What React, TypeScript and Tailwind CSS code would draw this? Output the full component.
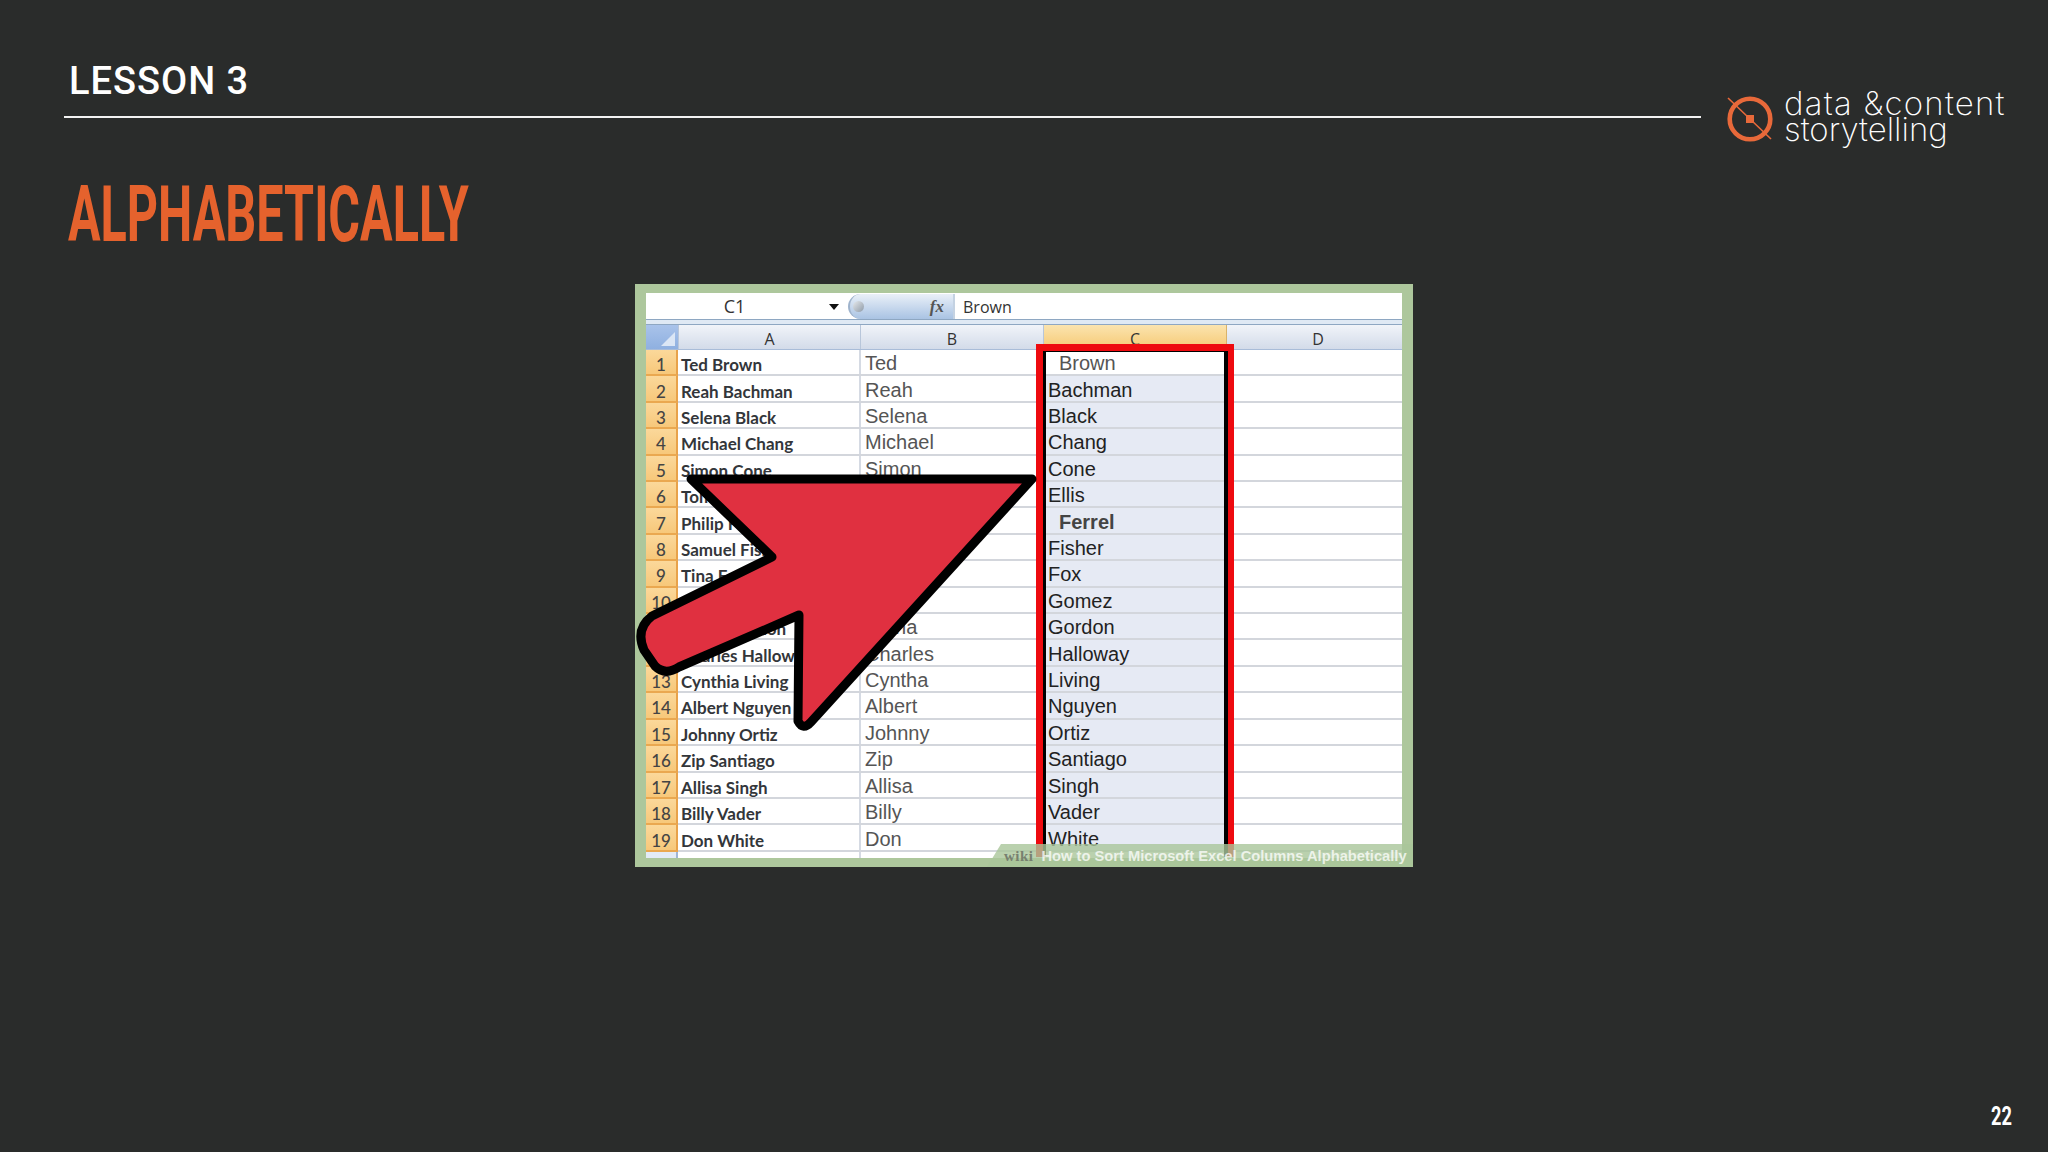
const rows: [string, string, string][] = [
  ["Ted Brown", "Ted", "Brown"],
  ["Reah Bachman", "Reah", "Bachman"],
  ["Selena Black", "Selena", "Black"],
  ["Michael Chang", "Michael", "Chang"],
  ["Simon Cone", "Simon", "Cone"],
  ["Tom Ellis", "Tom", "Ellis"],
  ["Philip Ferrel", "Philip", "Ferrel"],
  ["Samuel Fisher", "Samuel", "Fisher"],
  ["Tina Fox", "Tina", "Fox"],
  ["Maria Gomez", "Maria", "Gomez"],
  ["Diana Gordon", "Diana", "Gordon"],
  ["Charles Halloway", "Charles", "Halloway"],
  ["Cynthia Living", "Cyntha", "Living"],
  ["Albert Nguyen", "Albert", "Nguyen"],
  ["Johnny Ortiz", "Johnny", "Ortiz"],
  ["Zip Santiago", "Zip", "Santiago"],
  ["Allisa Singh", "Allisa", "Singh"],
  ["Billy Vader", "Billy", "Vader"],
  ["Don White", "Don", "White"],
];

const Logo = () => (
  <div className="flex items-start gap-[9px] pt-[90px] pl-[24px]">
    <svg width="50" height="50" viewBox="0 0 50 50" className="shrink-0 mt-[4px]">
      <circle cx="25" cy="25" r="20.3" fill="none" stroke="#e8693a" strokeWidth="4.6" />
      <path d="M3 4 L46 45" stroke="#e8693a" strokeWidth="1.6" />
      <rect x="21" y="21" width="8" height="8" fill="#e8693a" />
    </svg>
    <div className="font-['Inter',sans-serif] font-extralight text-[33px] leading-[26px] text-white whitespace-nowrap">
      <div className="tracking-[1.2px]">data &amp;content</div>
      <div>storytelling</div>
    </div>
  </div>
);

const Sheet = () => (
  <div className="flex flex-col h-full bg-white">
    <div className="flex h-[26px] pt-[1px] font-['Open_Sans',sans-serif] text-[16px] text-[#333]">
      <div className="w-[202px] flex items-center">
        <span className="flex-1 text-center pr-[6px] text-[18px]">C1</span>
        <span className="w-0 h-0 border-x-[5px] border-x-transparent border-t-[6px] border-t-[#111] mr-[9px]" />
      </div>
      <div className="relative w-[105px] flex items-center justify-end pr-[9px] rounded-l-[13px] border-l-2 border-[#9fb3cc] bg-gradient-to-b from-[#eaf0f8] to-[#a9c3e3]">
        <span className="absolute left-[3px] top-[7px] w-[11px] h-[11px] rounded-full bg-gradient-to-br from-[#e6e9ec] to-[#8f9ba8]" />
        <span className="font-['Liberation_Serif',serif] italic font-bold text-[17px] text-[#555]">fx</span>
      </div>
      <div className="flex-1 flex items-center pl-[8px] border-l-2 border-[#c4d2e2]">Brown</div>
    </div>
    <div className="h-[6px] border-y border-[#8ea7c2] bg-[#dfe9f4]" />
    <div className="grid grid-cols-[32px_183px_183px_183px_175px] h-[25px] text-[16px] leading-none text-[#333] font-['Open_Sans',sans-serif] border-b border-[#a9bcd8]">
      <div className="bg-gradient-to-b from-[#a9c3ea] to-[#8fb0e0] flex items-end justify-end pb-[3px] pr-[3px]">
        <div className="w-0 h-0 border-l-[14px] border-l-transparent border-b-[14px] border-b-[#dbe6f5]" />
      </div>
      <div className="bg-gradient-to-b from-[#f1f4f9] to-[#d3dbe9] border-x border-[#b8c6da] flex items-center justify-center pt-[3px]">A</div>
      <div className="bg-gradient-to-b from-[#f1f4f9] to-[#d3dbe9] border-r border-[#b8c6da] flex items-center justify-center pt-[3px]">B</div>
      <div className="bg-gradient-to-b from-[#fbe4ae] to-[#f6c973] border-r border-[#d9b36a] flex items-center justify-center pt-[3px]">C</div>
      <div className="bg-gradient-to-b from-[#f1f4f9] to-[#d3dbe9] flex items-center justify-center pl-[7px] pt-[3px]">D</div>
    </div>
    {rows.map(([a, b, c], i) => (
      <div key={i} className="grid grid-cols-[32px_183px_183px_183px_175px] grid-rows-1 h-[26.42px] border-b-2 border-[#d3d6dc] leading-none">
        <div className="min-h-0 bg-gradient-to-b from-[#fbd89a] to-[#f7c87a] border-r-2 border-r-[#e8a24a] border-b-2 border-b-[#eaa850] -mb-[2px] pt-[5px] flex items-center justify-center font-['Lato',sans-serif] font-medium text-[17px] text-[#444]">{i + 1}</div>
        <div className="min-h-0 flex items-center pl-[3px] pt-[5px] border-r-2 border-[#d5dae3] font-['Lato',sans-serif] font-bold text-[17px] text-[#33363a] whitespace-nowrap overflow-hidden">{a}</div>
        <div className="min-h-0 flex items-center pl-[4px] pt-[2px] font-['Liberation_Sans',sans-serif] text-[20px] text-[#555] whitespace-nowrap">{b}</div>
        <div className={`min-h-0 flex items-center pt-[2px] font-['Liberation_Sans',sans-serif] text-[20px] whitespace-nowrap ${i === 0 ? "bg-white pl-[15px] text-[#555]" : i === 6 ? "bg-[#e6eaf4] pl-[15px] font-bold text-[#444]" : "bg-[#e6eaf4] pl-[4px] text-[#222]"}`}>{c}</div>
        <div />
      </div>
    ))}
    <div className="flex-1 grid grid-cols-[32px_183px_1fr]">
      <div className="bg-[#e3ebf7] border-r-2 border-[#9fb5d6]" />
      <div className="border-r-2 border-[#d5dae3]" />
      <div />
    </div>
  </div>
);

export default function App() {
  return (
    <div className="w-[2048px] h-[1152px] bg-[#2a2c2b] flex flex-col overflow-hidden">
      <div className="flex items-start h-[118px]">
        <div className="w-[1637px] h-[118px] ml-[64px] shrink-0 flex items-end pb-[15px] pl-[5px] border-b-2 border-[#f2f2f2]">
          <span className="font-['Roboto',sans-serif] font-medium text-[38px] leading-[40px] tracking-[1px] text-white">LESSON 3</span>
        </div>
        <Logo />
      </div>
      <div className="pl-[68px] mt-[57px] h-[109px]">
        <h1 className="inline-block origin-left scale-x-[0.63] font-['Roboto',sans-serif] font-bold text-[77px] leading-[80px] text-[#e5622d] whitespace-nowrap">ALPHABETICALLY</h1>
      </div>
      <div className="relative w-[778px] h-[583px] mx-auto bg-[#adc79c] pt-[9px] px-[11px] pb-[9px]">
        <Sheet />
        <div className="absolute left-[401px] top-[60px] w-[198px] h-[513px] flex border-t-[7px] border-l-[7px] border-r-[6px] border-[#ee0a0f]">
          <div className="flex-1 border-l-[3px] border-r-[4px] border-t border-black" />
        </div>
        <svg className="absolute left-0 top-0" width="778" height="583" viewBox="0 0 778 583">
          <path
            d="M56 195 L397 195 L176 438 Q168 447 163 437 L164 331 L44 383 Q30 392 20 382 L9 366 Q0 345 17 332 L137 273 Z"
            fill="#e03040"
            stroke="#000"
            strokeWidth="9"
            strokeLinejoin="round"
          />
        </svg>
        <div className="absolute right-0 bottom-0 h-[23px] w-[426px] flex items-center pt-[1px] [clip-path:polygon(14px_0,100%_0,100%_100%,0_100%)] bg-[#a9c59a]/80">
          <span className="pl-[17px] font-['Liberation_Serif',serif] font-bold text-[15px] text-[#77806f] tracking-[0.5px]">wiki</span>
          <span className="pl-[8px] font-['Liberation_Sans',sans-serif] font-bold text-[14.7px] text-white/75 whitespace-nowrap">How to Sort Microsoft Excel Columns Alphabetically</span>
        </div>
      </div>
      <div className="flex-1 flex justify-end items-end pr-[36px] pb-[22px]">
        <span className="inline-block origin-right scale-x-[0.7] font-['Roboto',sans-serif] font-bold text-[26px] leading-[28px] text-white">22</span>
      </div>
    </div>
  );
}
